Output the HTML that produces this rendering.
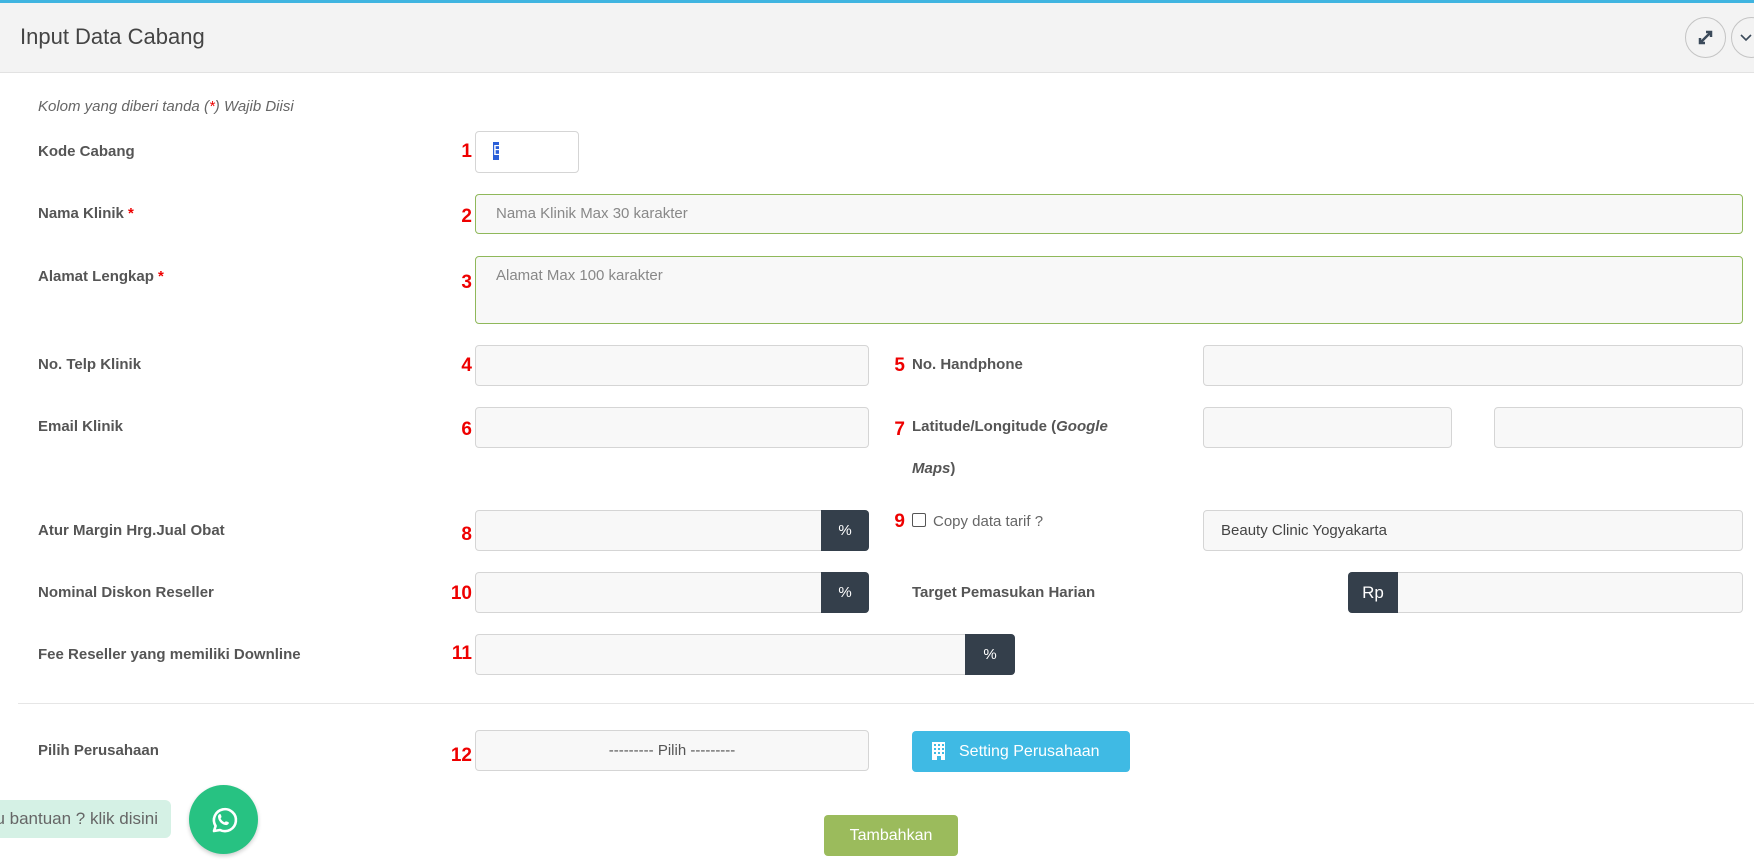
<!DOCTYPE html>
<html><head><meta charset="utf-8"><style>
*{box-sizing:border-box;margin:0;padding:0}
body{width:1754px;height:866px;overflow:hidden;background:#fff;font-family:"Liberation Sans",sans-serif;color:#555;position:relative}
.a{position:absolute}
.hdr{left:0;top:0;width:1754px;height:73px;background:#f3f3f3;border-top:3px solid #3fb4e0;border-bottom:1px solid #e2e2e2}
.t{left:20px;top:24px;font-size:22px;color:#444}
.cb{width:41px;height:41px;border:1px solid #c4c4c4;border-radius:50%;top:17px}
.lbl{left:38px;font-size:15px;font-weight:bold;color:#555}
.num{font-size:19px;font-weight:bold;color:#e00;font-family:"Liberation Sans",sans-serif;text-align:right;width:30px}
.in{background:#f8f8f8;border:1px solid #d5d5d5;border-radius:4px}
.g{border-color:#8fb85a}
.ph{font-size:15px;color:#888;padding-left:20px}
.ad{background:#343f4b;color:#fff;font-size:15px;display:flex;align-items:center;justify-content:center;border-radius:0 4px 4px 0}
.st{color:#e00}
</style></head><body>
<div class="a hdr"></div>
<div class="a t">Input Data Cabang</div>
<div class="a cb" style="left:1685px"><svg width="39" height="39" viewBox="0 0 39 39"><path d="M14 25 L25 14 M20 14h5v5 M14 20v5h5" stroke="#3b4a5a" stroke-width="2.5" fill="none"/></svg></div>
<div class="a cb" style="left:1731px"><svg width="20" height="39"><path d="M9 17l5 5 5-5" stroke="#3b4a5a" stroke-width="1.6" fill="none"/></svg></div>

<div class="a" style="left:38px;top:98px;font-size:15px;font-style:italic;color:#666">Kolom yang diberi tanda (<span class="st">*</span>) Wajib Diisi</div>

<div class="a lbl" style="top:143px">Kode Cabang</div>
<div class="a num" style="left:442px;top:141px">1</div>
<div class="a" style="left:475px;top:131px;width:104px;height:42px;border:1px solid #d5d5d5;border-radius:4px;background:#fff"><span style="position:absolute;left:17px;top:10px;background:#2a5fd8;color:#fff;font-size:15px;width:6px;height:18px;line-height:18px">E</span></div>

<div class="a lbl" style="top:205px">Nama Klinik <span class="st">*</span></div>
<div class="a num" style="left:442px;top:206px">2</div>
<div class="a in g ph" style="left:475px;top:194px;width:1268px;height:40px;line-height:38px">Nama Klinik Max 30 karakter</div>

<div class="a lbl" style="top:268px">Alamat Lengkap <span class="st">*</span></div>
<div class="a num" style="left:442px;top:272px">3</div>
<div class="a in g ph" style="left:475px;top:256px;width:1268px;height:68px;padding-top:10px">Alamat Max 100 karakter</div>

<div class="a lbl" style="top:356px">No. Telp Klinik</div>
<div class="a num" style="left:442px;top:355px">4</div>
<div class="a in" style="left:475px;top:345px;width:394px;height:41px"></div>
<div class="a num" style="left:875px;top:355px">5</div>
<div class="a lbl" style="left:912px;top:356px">No. Handphone</div>
<div class="a in" style="left:1203px;top:345px;width:540px;height:41px"></div>

<div class="a lbl" style="top:418px">Email Klinik</div>
<div class="a num" style="left:442px;top:419px">6</div>
<div class="a in" style="left:475px;top:407px;width:394px;height:41px"></div>
<div class="a num" style="left:875px;top:419px">7</div>
<div class="a lbl" style="left:912px;top:406px;line-height:42px;width:240px">Latitude/Longitude (<i>Google<br>Maps</i>)</div>
<div class="a in" style="left:1203px;top:407px;width:249px;height:41px"></div>
<div class="a in" style="left:1494px;top:407px;width:249px;height:41px"></div>

<div class="a lbl" style="top:522px">Atur Margin Hrg.Jual Obat</div>
<div class="a num" style="left:442px;top:524px">8</div>
<div class="a in" style="left:475px;top:510px;width:394px;height:41px"></div>
<div class="a ad" style="left:821px;top:510px;width:48px;height:41px">%</div>
<div class="a num" style="left:875px;top:511px">9</div>
<div class="a" style="left:912px;top:513px;width:14px;height:14px;border:1px solid #555;border-radius:2px"></div>
<div class="a" style="left:933px;top:513px;font-size:15px;color:#666">Copy data tarif ?</div>
<div class="a in" style="left:1203px;top:510px;width:540px;height:41px;padding-left:17px;line-height:39px;font-size:15px;color:#444">Beauty Clinic Yogyakarta</div>

<div class="a lbl" style="top:584px">Nominal Diskon Reseller</div>
<div class="a num" style="left:442px;top:583px">10</div>
<div class="a in" style="left:475px;top:572px;width:394px;height:41px"></div>
<div class="a ad" style="left:821px;top:572px;width:48px;height:41px">%</div>
<div class="a lbl" style="left:912px;top:584px">Target Pemasukan Harian</div>
<div class="a in" style="left:1348px;top:572px;width:395px;height:41px"></div>
<div class="a ad" style="left:1348px;top:572px;width:50px;height:41px;border-radius:4px 0 0 4px;font-size:17px">Rp</div>

<div class="a lbl" style="top:646px">Fee Reseller yang memiliki Downline</div>
<div class="a num" style="left:442px;top:643px">11</div>
<div class="a in" style="left:475px;top:634px;width:540px;height:41px"></div>
<div class="a ad" style="left:965px;top:634px;width:50px;height:41px">%</div>

<div class="a" style="left:18px;top:703px;width:1736px;height:1px;background:#e6e6e6"></div>

<div class="a lbl" style="top:742px">Pilih Perusahaan</div>
<div class="a num" style="left:442px;top:745px">12</div>
<div class="a in" style="left:475px;top:730px;width:394px;height:41px;text-align:center;line-height:39px;font-size:15px;color:#555">--------- Pilih ---------</div>
<div class="a" style="left:912px;top:731px;width:218px;height:41px;background:#3fbae4;border-radius:4px;color:#fff;font-size:16px;line-height:41px;padding-left:47px">Setting Perusahaan</div>
<svg class="a" style="left:931px;top:741px" width="16" height="20"><rect x="1" y="1" width="13" height="18" fill="#fff"/><g fill="#3fbae4"><rect x="3" y="3" width="2" height="2"/><rect x="7" y="3" width="2" height="2"/><rect x="11" y="3" width="2" height="2"/><rect x="3" y="7" width="2" height="2"/><rect x="7" y="7" width="2" height="2"/><rect x="11" y="7" width="2" height="2"/><rect x="3" y="11" width="2" height="2"/><rect x="7" y="11" width="2" height="2"/><rect x="11" y="11" width="2" height="2"/><rect x="6" y="15" width="4" height="4"/></g></svg>

<div class="a" style="left:-10px;top:800px;width:181px;height:38px;background:#d5f1e5;border-radius:6px;font-size:17px;color:#666;line-height:38px;text-align:right;padding-right:13px">u bantuan ? klik disini</div>
<div class="a" style="left:189px;top:785px;width:69px;height:69px;border-radius:50%;background:#27c282;box-shadow:0 2px 4px rgba(0,0,0,.2)"></div>
<svg class="a" style="left:208px;top:804px" width="32" height="32" viewBox="0 0 32 32"><path d="M6 27l1.6-5A11 11 0 1 1 12 26z" fill="none" stroke="#fff" stroke-width="2.6" stroke-linejoin="round"/><path d="M12 10c1 0 1.5 2.5 1.5 3s-1 1-0.8 1.6c.8 1.6 2 2.8 3.6 3.6.6.2 1-.8 1.6-.8s3 .5 3 1.5-1.5 2.2-2.5 2.2C14 21 10 17 10 12.5c0-1 1-2.5 2-2.5z" fill="#fff"/></svg>

<div class="a" style="left:824px;top:815px;width:134px;height:41px;background:#9bbb5c;border-radius:4px;color:#fff;font-size:16px;line-height:41px;text-align:center">Tambahkan</div>
</body></html>
